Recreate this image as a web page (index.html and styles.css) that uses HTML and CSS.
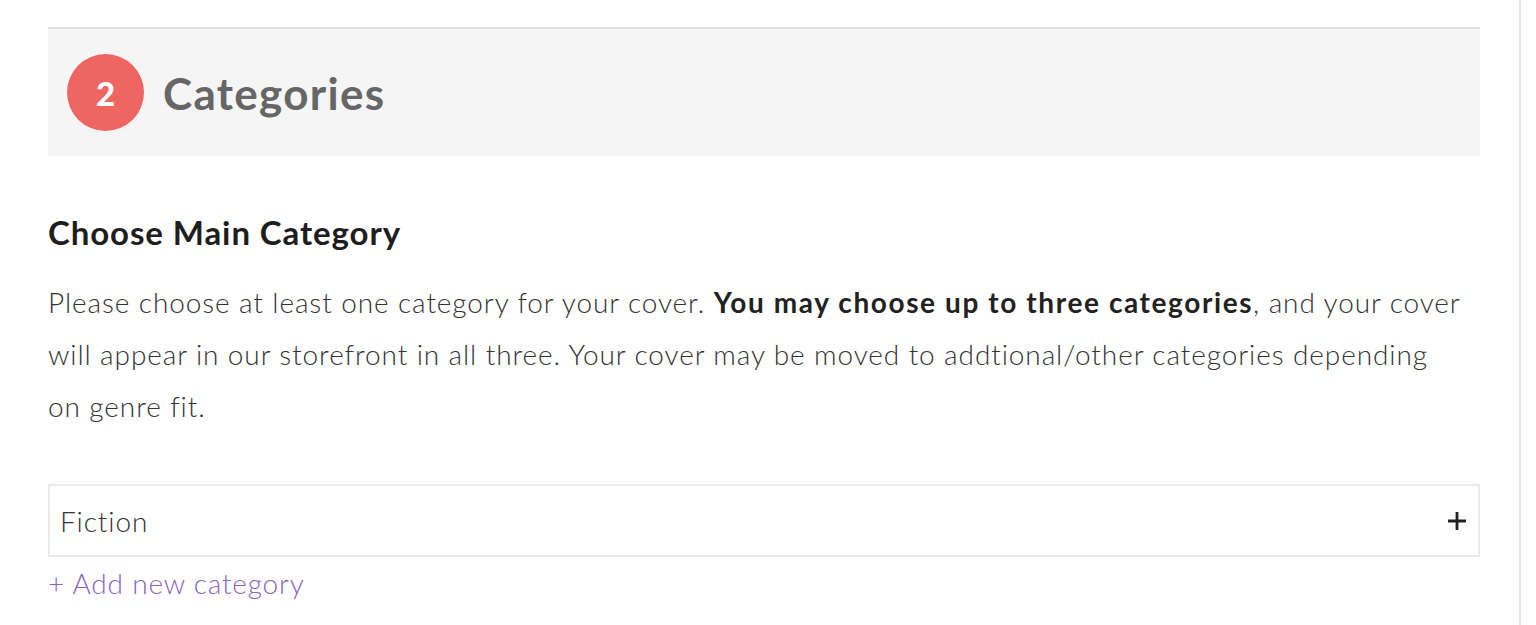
FILE: index.html
```html
<!DOCTYPE html>
<html lang="en">
<head>
<meta charset="utf-8">
<title>Categories</title>
<link rel="stylesheet" href="styles.css">
</head>
<body>
<div class="page">
  <div class="content">
    <div class="section-header">
      <div class="step">2</div>
      <h2 class="section-title">Categories</h2>
    </div>
    <h3 class="sub-title">Choose Main Category</h3>
    <p class="desc">Please choose at least one category for your cover. <strong>You may choose up to three categories</strong>, and your cover will appear in our storefront in all three. Your cover may be moved to addtional/other categories depending on genre fit.</p>
    <div class="select-box">
      <span class="select-label">Fiction</span>
      <svg class="plus" width="20" height="20" viewBox="0 0 20 20"><path d="M10 1v18M1 10h18" stroke="#222" stroke-width="2.8" fill="none"/></svg>
    </div>
    <a class="add-link" href="#">+ Add new category</a>
  </div>
</div>
</body>
</html>
```
FILE: styles.css
```css
* { box-sizing: border-box; }
html, body { margin: 0; padding: 0; background: #fff; }
body { font-family: "Lato", "Liberation Sans", sans-serif; color: #222; }
.page {
  width: 1521px;
  height: 625px;
  border-right: 2px solid #e4e4e4;
  padding: 27px 0 0 48px;
  overflow: hidden;
}
.content { width: 1432px; }
.section-header {
  display: flex;
  align-items: center;
  height: 129px;
  border-top: 2px solid #e0e0e0;
  background: #f5f5f5;
  padding-left: 19px;
  gap: 19px;
}
.step {
  width: 77px; height: 77px;
  border-radius: 50%;
  background: #ee6561;
  color: #fff;
  font-weight: 900;
  font-size: 33px;
  display: flex; align-items: center; justify-content: center;
}
.section-title {
  margin: 0;
  font-size: 44px;
  font-weight: 700;
  letter-spacing: 1.3px;
  color: #666;
}
.sub-title {
  margin: 56px 0 0;
  font-size: 33px;
  font-weight: 700;
  letter-spacing: 0.9px;
  line-height: 40px;
  color: #1e1e1e;
}
.desc {
  margin: 24px 0 0;
  max-width: 1418px;
  font-size: 28px;
  font-weight: 300;
  letter-spacing: 0.9px;
  line-height: 52px;
  color: #333;
}
.desc strong { font-weight: 700; color: #222; letter-spacing: 1.6px; }
.select-box {
  margin-top: 52px;
  height: 73px;
  border: 2px solid #ebebeb;
  display: flex; align-items: center; justify-content: space-between;
  padding: 0 11px 0 10px;
}
.select-label { font-size: 28px; font-weight: 300; letter-spacing: 0.9px; color: #333; }
.add-link {
  display: block;
  margin-top: 6px;
  font-size: 28px;
  font-weight: 300;
  letter-spacing: 0.8px;
  color: #8a64c2;
  text-decoration: none;
  line-height: 40px;
}
```
